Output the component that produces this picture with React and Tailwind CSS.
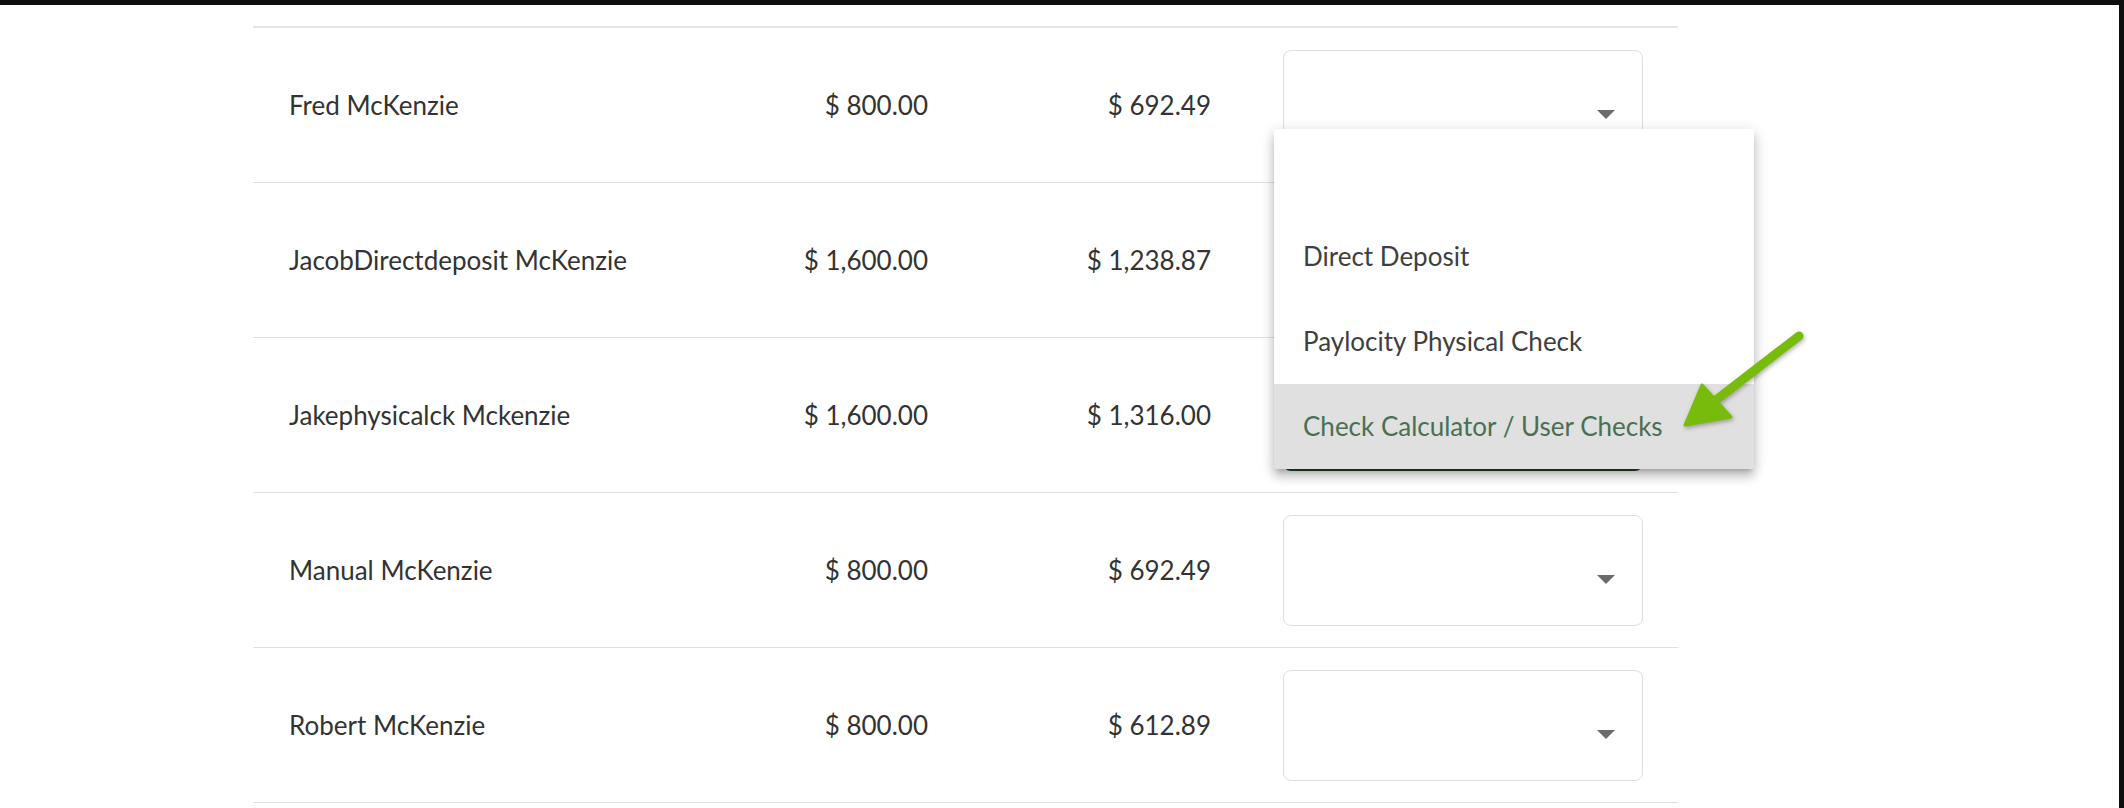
import React from "react";

const rows = [
  { name: "Fred McKenzie", gross: "$ 800.00", net: "$ 692.49" },
  { name: "JacobDirectdeposit McKenzie", gross: "$ 1,600.00", net: "$ 1,238.87" },
  { name: "Jakephysicalck Mckenzie", gross: "$ 1,600.00", net: "$ 1,316.00", focused: true },
  { name: "Manual McKenzie", gross: "$ 800.00", net: "$ 692.49" },
  { name: "Robert McKenzie", gross: "$ 800.00", net: "$ 612.89" },
];

const options = ["", "Direct Deposit", "Paylocity Physical Check", "Check Calculator / User Checks"];

function Caret() {
  return (
    <svg width="18" height="9" viewBox="0 0 18 9">
      <path d="M0 0 L18 0 L9 9 Z" fill="#6b6b6b" />
    </svg>
  );
}

function PayMethodSelect({ focused }) {
  return (
    <div
      className={`w-[360px] h-[111px] rounded-[8px] flex items-center justify-end pr-[27px] pt-[18px] bg-white ${
        focused ? "border-2 border-[#23482c]" : "border border-[#dedede]"
      }`}
    >
      <Caret />
    </div>
  );
}

export default function App() {
  return (
    <div
      className="relative w-[2124px] h-[808px] overflow-hidden bg-white border-t-[5px] border-r-[5px] border-[#0e0e0e] text-[#333333]"
      style={{ fontFamily: "Lato, 'Noto Sans', sans-serif" }}
    >
      {/* Employee table */}
      <div className="relative ml-[253px] mt-[21px] w-[1425px] border-t-2 border-[#e6e6e6]">
        {rows.map((row) => (
          <div key={row.name} className="flex items-center h-[155px] border-b border-[#e0e0e0] pl-[36px] pr-[35px] text-[26px]">
            <div className="w-[411px]">{row.name}</div>
            <div className="w-[228px] text-right">{row.gross}</div>
            <div className="w-[283px] text-right">{row.net}</div>
            <div className="ml-[72px]">
              <PayMethodSelect focused={row.focused} />
            </div>
          </div>
        ))}

        {/* Open dropdown menu */}
        <div className="absolute left-[1021px] top-[101px] w-[480px] bg-white rounded-[4px] overflow-hidden shadow-[0_5px_5px_-3px_rgba(0,0,0,0.2),0_8px_10px_1px_rgba(0,0,0,0.14),0_3px_14px_2px_rgba(0,0,0,0.12)]">
          {options.map((opt, i) => (
            <div
              key={i}
              className={`h-[85px] flex items-center pl-[29px] text-[26px] ${
                i === 3 ? "bg-[#e0e0e0] text-[#4a6f52]" : "text-[#3f3f3f]"
              }`}
            >
              {opt}
            </div>
          ))}
        </div>
      </div>

      {/* Annotation arrow */}
      <svg
        className="absolute left-0 top-0 pointer-events-none"
        width="2124"
        height="808"
        style={{ filter: "drop-shadow(1px 2px 2px rgba(0,0,0,0.3))" }}
      >
        <line x1="1799" y1="331" x2="1716" y2="395" stroke="#78bb0a" strokeWidth="9" strokeLinecap="round" />
        <path d="M1685 420 L1702 380 L1731 412 Z" fill="#78bb0a" stroke="#78bb0a" strokeWidth="3" strokeLinejoin="round" />
      </svg>
    </div>
  );
}
